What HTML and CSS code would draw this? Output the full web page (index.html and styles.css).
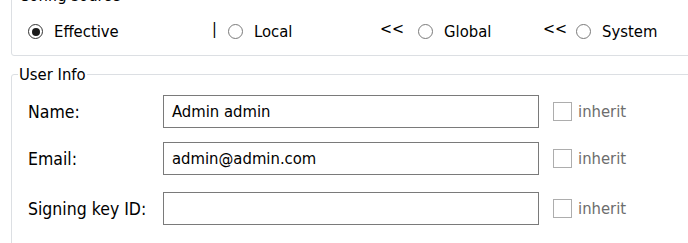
FILE: index.html
```html
<!DOCTYPE html>
<html lang="en">
<head>
    <meta charset="utf-8">
    <title>Config</title>
    <link rel="stylesheet" href="styles.css">
</head>
<body>
<fieldset class="group source">
    <legend>Config source</legend>
    <div class="sources">
        <label class="radio"><span class="dot checked"></span>Effective</label>
        <span class="sep">|</span>
        <label class="radio"><span class="dot"></span>Local</label>
        <span class="sep">&lt;&lt;</span>
        <label class="radio"><span class="dot"></span>Global</label>
        <span class="sep">&lt;&lt;</span>
        <label class="radio"><span class="dot"></span>System</label>
    </div>
</fieldset>

<fieldset class="group user">
    <legend>User Info</legend>
    <div class="form">
        <div class="row">
            <span class="label">Name:</span>
            <div class="field">Admin admin</div>
            <label class="check"><span class="box"></span>inherit</label>
        </div>
        <div class="row">
            <span class="label">Email:</span>
            <div class="field">admin@admin.com</div>
            <label class="check"><span class="box"></span>inherit</label>
        </div>
        <div class="row last">
            <span class="label">Signing key ID:</span>
            <div class="field"></div>
            <label class="check"><span class="box"></span>inherit</label>
        </div>
    </div>
</fieldset>
</body>
</html>
```

FILE: styles.css
```css
html {
    overflow: hidden;
}

body {
    margin: 0;
    padding: 0 0 0 11px;
    background: #ffffff;
    color: #000000;
    font-family: "DejaVu Sans Condensed", "DejaVu Sans", sans-serif;
    font-size: 16.5px;
    width: 720px;
}

.group {
    border: 1px solid #dcdfe3;
    border-radius: 3px;
    margin: 0;
    padding: 0;
}

.group legend {
    padding: 0 1px;
    margin-left: 6px;
    line-height: 19px;
}

.source {
    margin-top: -14px;
    height: 70px;
    box-sizing: border-box;
}

.sources {
    display: grid;
    grid-template-columns: 184px 16px 152px 38px 125px 33px auto;
    align-items: center;
    padding: 17px 0 0 16px;
}

.radio {
    display: flex;
    align-items: center;
}

.dot {
    flex: none;
    width: 15px;
    height: 15px;
    box-sizing: border-box;
    border: 1px solid #7a7a7a;
    border-radius: 50%;
    margin-right: 11px;
    display: flex;
    align-items: center;
    justify-content: center;
}

.dot.checked {
    border-color: #333333;
}

.dot.checked::after {
    content: "";
    width: 8px;
    height: 8px;
    border-radius: 50%;
    background: #1a1a1a;
}

.sep {
    font-size: 16px;
    position: relative;
    top: -3px;
}

.user {
    margin-top: 9px;
    height: 190px;
    box-sizing: border-box;
}

.form {
    display: flex;
    flex-direction: column;
    gap: 14px;
    padding: 11px 0 0 16px;
}

.row {
    display: grid;
    grid-template-columns: 135px 376px auto;
    align-items: center;
}

.row.last {
    margin-top: 3px;
}

.label {
    font-size: 17.5px;
}

.field {
    height: 33px;
    box-sizing: border-box;
    border: 1px solid #7a7a7a;
    padding: 0 8px;
    line-height: 31px;
}

.check {
    display: flex;
    align-items: center;
    margin-left: 14px;
    color: #6d6d6d;
}

.box {
    flex: none;
    width: 19px;
    height: 19px;
    box-sizing: border-box;
    border: 1px solid #adadad;
    margin-right: 6px;
}
```
